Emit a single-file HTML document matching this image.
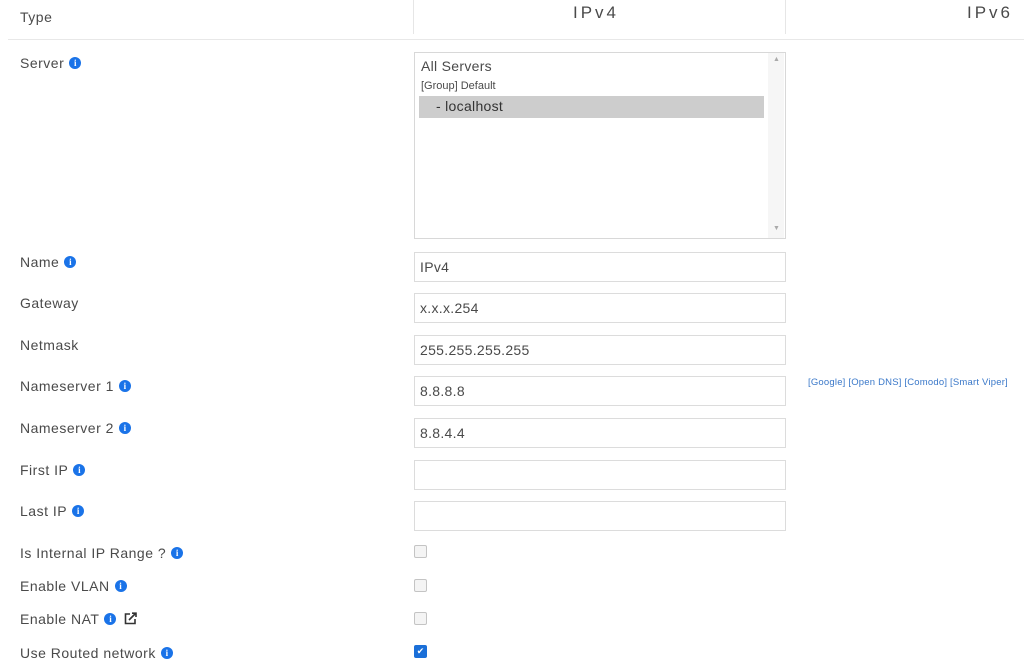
<!DOCTYPE html>
<html><head><meta charset="utf-8"><style>
body{margin:0;width:1024px;height:668px;background:#fff;font-family:"Liberation Sans",sans-serif;color:#4a4a4a;position:relative;overflow:hidden}
.a{position:absolute}
.lbl{position:absolute;left:20px;font-size:14px;white-space:nowrap;line-height:16px;letter-spacing:0.5px}
.i{display:inline-block;width:12px;height:12px;border-radius:50%;background:#1a73e8;color:#fff;font-size:9px;font-weight:bold;text-align:center;line-height:12px;vertical-align:top;margin-top:2px;margin-left:5px;font-family:"Liberation Serif",serif;letter-spacing:0}
.inp{position:absolute;left:414px;height:28px;border:1px solid #dcdcdc;font-size:14px;line-height:28px;box-sizing:content-box;padding-left:5px;width:365px;letter-spacing:0.3px}
.cb{position:absolute;left:414px;width:11px;height:11px;border:1px solid #c4c4c4;border-radius:2px;background:#f4f4f4}
</style></head><body>
<div class="lbl" style="top:9px">Type</div>
<div class="a" style="left:413px;top:0;width:1px;height:34px;background:#e6e6e6"></div>
<div class="a" style="left:785px;top:0;width:1px;height:34px;background:#e6e6e6"></div>
<div class="a" style="left:573px;top:3px;font-size:17px;letter-spacing:3px">IPv4</div>
<div class="a" style="left:967px;top:3px;font-size:17px;letter-spacing:3px">IPv6</div>
<div class="a" style="left:8px;top:39px;width:1016px;height:1px;background:#e8e8e8"></div>

<div class="lbl" style="top:55px">Server<span class="i">i</span></div>
<div class="a" style="left:414px;top:52px;width:370px;height:185px;border:1px solid #d8d8d8"></div>
<div class="a" style="left:768px;top:53px;width:16px;height:185px;background:#f6f6f6"></div>
<div class="a" style="left:773px;top:56px;font-size:7px;color:#aaa">▲</div>
<div class="a" style="left:773px;top:225px;font-size:7px;color:#aaa">▼</div>
<div class="a" style="left:421px;top:58px;font-size:14px;letter-spacing:0.3px">All Servers</div>
<div class="a" style="left:421px;top:80px;font-size:11px">[Group] Default</div>
<div class="a" style="left:419px;top:96px;width:345px;height:22px;background:#cdcdcd"></div>
<div class="a" style="left:436px;top:98px;font-size:14px;color:#333;letter-spacing:0.3px">- localhost</div>

<div class="lbl" style="top:254px">Name<span class="i">i</span></div>
<div class="inp" style="top:252px">IPv4</div>
<div class="lbl" style="top:295px">Gateway</div>
<div class="inp" style="top:293px">x.x.x.254</div>
<div class="lbl" style="top:337px">Netmask</div>
<div class="inp" style="top:335px">255.255.255.255</div>
<div class="lbl" style="top:378px">Nameserver 1<span class="i">i</span></div>
<div class="inp" style="top:376px">8.8.8.8</div>
<div class="a" style="left:808px;top:377px;font-size:9.5px;color:#3a78c9;letter-spacing:0.2px">[Google] [Open DNS] [Comodo] [Smart Viper]</div>
<div class="lbl" style="top:420px">Nameserver 2<span class="i">i</span></div>
<div class="inp" style="top:418px">8.8.4.4</div>
<div class="lbl" style="top:462px">First IP<span class="i">i</span></div>
<div class="inp" style="top:460px"></div>
<div class="lbl" style="top:503px">Last IP<span class="i">i</span></div>
<div class="inp" style="top:501px"></div>

<div class="lbl" style="top:545px">Is Internal IP Range ?<span class="i">i</span></div>
<div class="cb" style="top:545px"></div>
<div class="lbl" style="top:578px">Enable VLAN<span class="i">i</span></div>
<div class="cb" style="top:579px"></div>
<div class="lbl" style="top:611px">Enable NAT<span class="i">i</span>
<svg width="13" height="13" viewBox="0 0 13 13" style="vertical-align:-1px;margin-left:3px"><path d="M6 2H1.5V11.5H11V7" fill="none" stroke="#333" stroke-width="1.6"/><path d="M5 8L11.5 1.5M8 1.2H12V5" fill="none" stroke="#333" stroke-width="1.6"/></svg></div>
<div class="cb" style="top:612px"></div>
<div class="lbl" style="top:645px">Use Routed network<span class="i">i</span></div>
<div class="a" style="left:414px;top:645px;width:13px;height:13px;border-radius:2px;background:#1a6fd8;color:#fff;font-size:9px;text-align:center;line-height:13px">✔</div>
</body></html>
